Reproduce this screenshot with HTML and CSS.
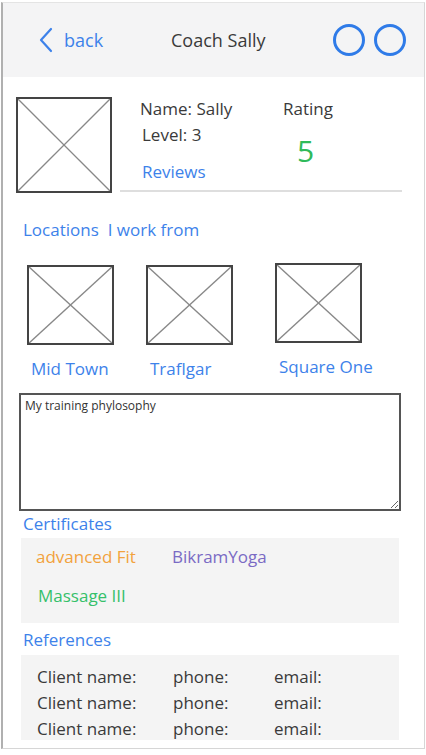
FILE: index.html
```html
<!DOCTYPE html>
<html>
  <head>
    <title>Coach Sally</title>
    <meta charset="UTF-8" />
    <link rel="stylesheet" href="styles.css">
  </head>
  <body>
    <div class="screen">
      <div class="header">
        <a class="back" href="#">
          <svg width="16" height="26" viewBox="0 0 16 26"><path d="M13 2 L3 13 L13 24" fill="none" stroke="#3d82ea" stroke-width="2.2" stroke-linecap="round" stroke-linejoin="round"/></svg>
          <span>back</span>
        </a>
        <div class="title">Coach Sally</div>
        <div class="actions">
          <span class="circle"></span>
          <span class="circle"></span>
        </div>
      </div>

      <div class="profile">
        <svg class="placeholder avatar" viewBox="0 0 96 96" preserveAspectRatio="none">
          <line x1="0" y1="0" x2="96" y2="96" />
          <line x1="96" y1="0" x2="0" y2="96" />
          <rect x="1" y="1" width="94" height="94" />
        </svg>
        <div class="info">
          <div class="info-col">
            <div class="name">Name: Sally</div>
            <div class="level">Level: 3</div>
            <a class="link reviews" href="#">Reviews</a>
          </div>
          <div class="rating">
            <div>Rating</div>
            <div class="score">5</div>
          </div>
        </div>
      </div>

      <div class="section-title locations-title">Locations&nbsp; I work from</div>
      <div class="locations">
        <div class="location">
          <svg class="placeholder" viewBox="0 0 87 80" preserveAspectRatio="none">
            <line x1="0" y1="0" x2="87" y2="80" />
            <line x1="87" y1="0" x2="0" y2="80" />
            <rect x="1" y="1" width="85" height="78" />
          </svg>
          <div class="location-name">Mid Town</div>
        </div>
        <div class="location second">
          <svg class="placeholder" viewBox="0 0 87 80" preserveAspectRatio="none">
            <line x1="0" y1="0" x2="87" y2="80" />
            <line x1="87" y1="0" x2="0" y2="80" />
            <rect x="1" y="1" width="85" height="78" />
          </svg>
          <div class="location-name">Traflgar</div>
        </div>
        <div class="location third">
          <svg class="placeholder" viewBox="0 0 87 80" preserveAspectRatio="none">
            <line x1="0" y1="0" x2="87" y2="80" />
            <line x1="87" y1="0" x2="0" y2="80" />
            <rect x="1" y="1" width="85" height="78" />
          </svg>
          <div class="location-name">Square One</div>
        </div>
      </div>

      <textarea class="philosophy">My training phylosophy</textarea>

      <div class="section-title cert-title">Certificates</div>
      <div class="panel certificates">
        <span class="cert orange">advanced Fit</span>
        <span class="cert purple">BikramYoga</span>
        <span class="cert green">Massage III</span>
      </div>

      <div class="section-title ref-title">References</div>
      <div class="panel references">
        <div class="ref-row"><span>Client name:</span><span>phone:</span><span>email:</span></div>
        <div class="ref-row"><span>Client name:</span><span>phone:</span><span>email:</span></div>
        <div class="ref-row"><span>Client name:</span><span>phone:</span><span>email:</span></div>
      </div>
    </div>
  </body>
</html>
```

FILE: styles.css
```css
html {
  height: 100%;
}
body {
  margin: 0;
  background: #fff;
  font-family: "Open Sans", sans-serif;
  color: #3a3a3a;
}

.screen {
  margin: 2px 1px 0 1px;
  height: 745px;
  border: 1px solid #d6d6d6;
  border-left: 2px solid #b0b0b0;
  border-top: 1px solid #e4e4e4;
}

.header {
  display: flex;
  align-items: center;
  height: 74px;
  background: #f4f4f5;
  padding: 0 18px 0 35px;
}
.back {
  display: flex;
  align-items: center;
  gap: 10px;
  color: #3d82ea;
  text-decoration: none;
  font-size: 18px;
  width: 133px;
}
.title {
  flex: 1;
  font-size: 18px;
  color: #3a3a3a;
}
.actions {
  display: flex;
  gap: 9px;
}
.circle {
  width: 26px;
  height: 26px;
  border: 3px solid #2f7be8;
  border-radius: 50%;
}

.placeholder {
  display: block;
}
.placeholder line {
  stroke: #888;
  stroke-width: 1.3;
}
.placeholder rect {
  fill: none;
  stroke: #444;
  stroke-width: 2;
}

.profile {
  display: flex;
  margin-top: 20px;
  padding-left: 13px;
}
.avatar {
  width: 96px;
  height: 96px;
}
.info {
  display: flex;
  margin-left: 8px;
  width: 262px;
  padding-left: 20px;
  height: 93px;
  border-bottom: 2px solid #dedede;
  font-size: 17px;
}
.info-col {
  width: 143px;
}
.name {
  line-height: 24px;
}
.level {
  margin-left: 2px;
  line-height: 28px;
}
.link {
  color: #3d82ea;
  text-decoration: none;
}
.reviews {
  display: block;
  margin-top: 11px;
  margin-left: 2px;
  line-height: 24px;
}
.rating {
  line-height: 24px;
}
.score {
  margin-top: 13px;
  margin-left: 14px;
  font-size: 30px;
  line-height: 34px;
  color: #2fba5a;
}

.section-title {
  color: #3d82ea;
  font-size: 17px;
  line-height: 24px;
  margin-left: 20px;
}
.locations-title {
  margin-top: 25px;
}

.locations {
  display: flex;
  margin-top: 23px;
  padding-left: 24px;
}
.location {
  width: 119px;
}
.location.second {
  width: 129px;
}
.location.third {
  width: auto;
  margin-top: -2px;
}
.location .placeholder {
  width: 87px;
  height: 80px;
}
.location-name {
  color: #3d82ea;
  font-size: 17px;
  line-height: 24px;
  margin-top: 12px;
  margin-left: 4px;
}

.philosophy {
  display: block;
  box-sizing: border-box;
  width: 382px;
  height: 118px;
  margin: 12px 0 0 16px;
  border: 2px solid #555;
  padding: 2px 4px;
  font-family: "Open Sans", sans-serif;
  font-size: 12px;
  color: #333;
  resize: both;
}

.cert-title {
  margin-top: 2px;
  line-height: 22px;
}
.ref-title {
  margin-top: 6px;
  line-height: 22px;
}

.panel {
  background: #f4f4f4;
  margin-left: 18px;
  width: 378px;
  box-sizing: border-box;
}
.certificates {
  display: grid;
  grid-template-columns: 136px auto;
  align-content: start;
  row-gap: 15px;
  height: 85px;
  margin-top: 3px;
  padding: 7px 0 0 15px;
  font-size: 17px;
  line-height: 24px;
}
.orange {
  color: #f2a23c;
}
.purple {
  color: #7a6ac4;
}
.green {
  color: #35c06a;
  margin-left: 2px;
}

.references {
  height: 85px;
  margin-top: 4px;
  padding: 9px 0 0 16px;
  font-size: 17px;
}
.ref-row {
  display: flex;
  line-height: 26px;
}
.ref-row span:nth-child(1) {
  width: 136px;
}
.ref-row span:nth-child(2) {
  width: 101px;
}
```
